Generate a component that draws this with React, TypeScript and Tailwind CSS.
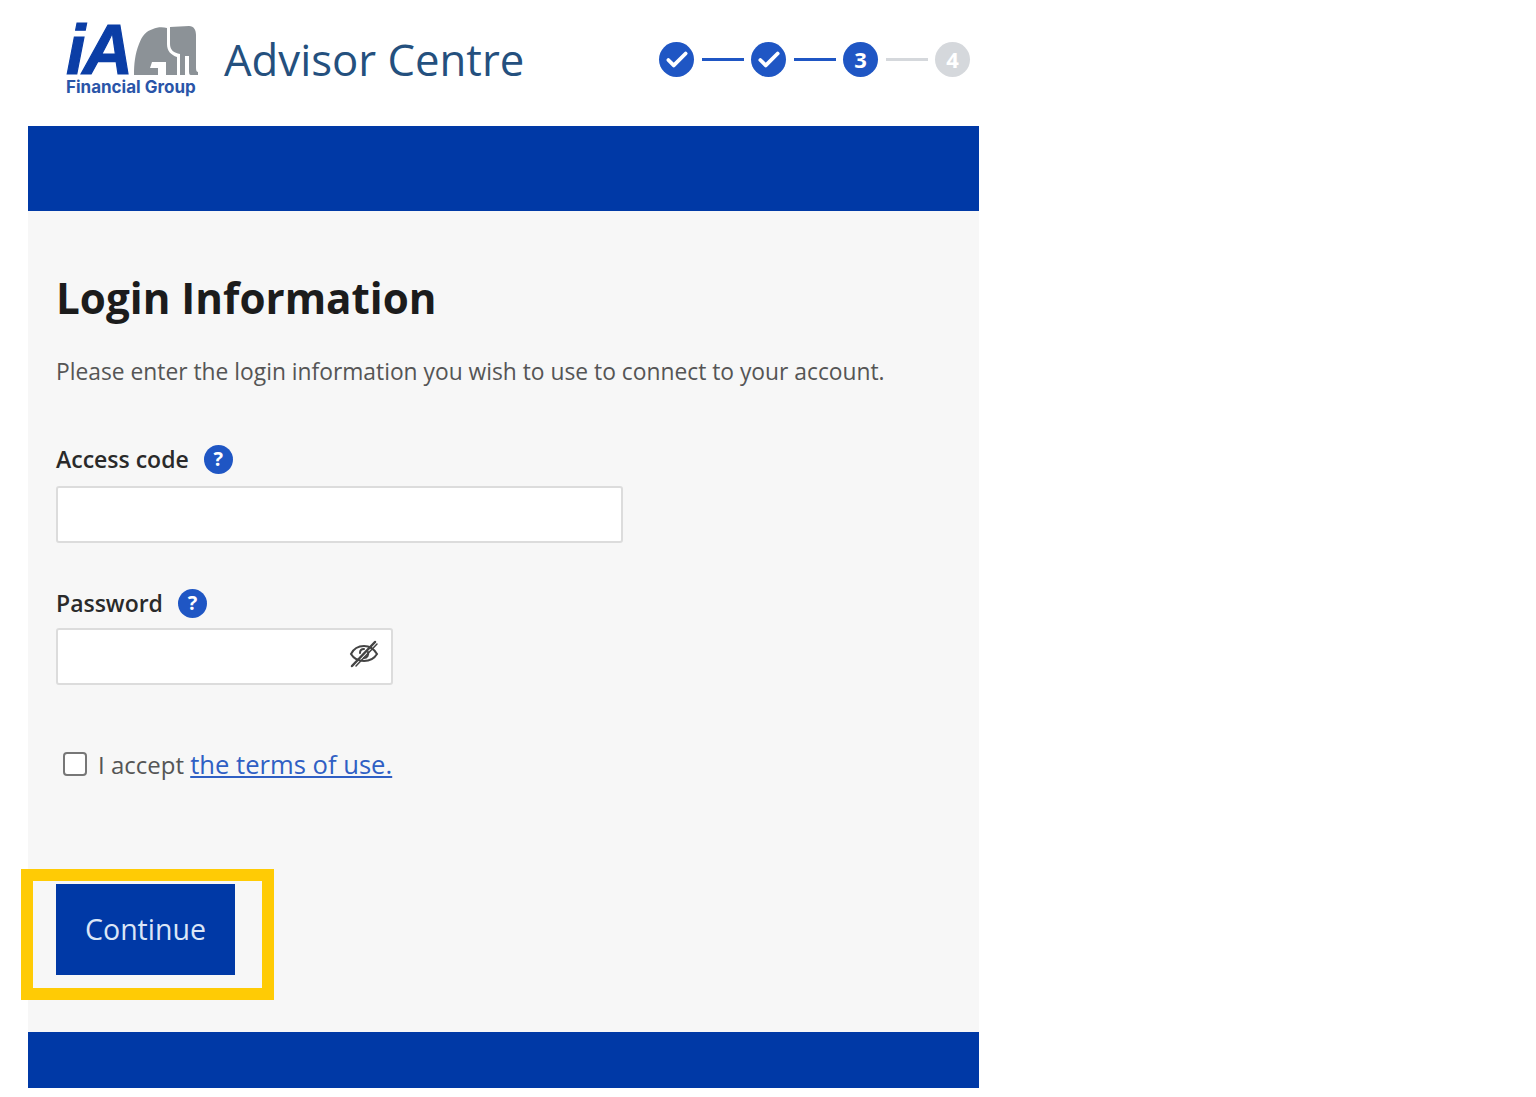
import { Fragment } from "react";
import { Check } from "lucide-react";

const STEPS = [
  { label: "", state: "done" },
  { label: "", state: "done" },
  { label: "3", state: "current" },
  { label: "4", state: "todo" },
];

// iA wordmark and elephant, both sit on the same baseline
function LogoMark() {
  return (
    <svg width="132" height="52" viewBox="0 0 132 52" className="block overflow-visible">
      <text
        x="0"
        y="50"
        fontFamily="'Liberation Sans', sans-serif"
        fontSize="70"
        fontWeight="700"
        fontStyle="italic"
        letterSpacing="-3"
        fill="#0b3ea6"
        stroke="#0b3ea6"
        strokeWidth="1.2"
      >
        iA
      </text>
      <g transform="translate(67 0)">
        <path
          d="M20 5 C24 3 30 3 34 4 L34 20 C34 27 38 31 44 33 L44 51 L33 51 L33 38 L19 38 L17 44 L25 44 L25 51 L1 51 C1 40 2 30 6 20 C9 12 13 7 20 5 Z"
          fill="#8c9297"
        />
        <path
          d="M37 3 L56 2 C61 2 63 6 63 11 L63 44 C63 47 64 48 65 48 L65 51 L58 51 C56 51 56 49 56 46 L56 32 L52 32 L52 51 L47 51 L47 30 C41 29 37 26 37 20 Z"
          fill="#8c9297"
        />
      </g>
    </svg>
  );
}

function SlashedEye() {
  return (
    <svg width="30" height="30" viewBox="0 0 30 30" fill="none" stroke="#444" strokeWidth="2" strokeLinecap="round">
      <path d="M2 15 C5 9 10 7 15 7 C20 7 25 10 28 15 C25 20 20 22 15 22 C10 22 5 20 2 15 Z" />
      <path d="M11 14 C11 11 13 10 15 10" />
      <path d="M19 13 C20 16 18 19 15 19" />
      <path d="M3 27 L26 3" strokeWidth="2.5" />
      <path d="M7 27 L28 5" strokeWidth="1.5" />
    </svg>
  );
}

function Stepper() {
  return (
    <div className="flex items-center gap-[7.5px]">
      {STEPS.map((s, i) => (
        <Fragment key={i}>
          {i > 0 && (
            <div className={`h-[3px] w-[42px] ${s.state === "todo" ? "bg-[#d5d8dc]" : "bg-[#1f56c4]"}`} />
          )}
          <div
            className={`flex h-[35px] w-[35px] items-center justify-center rounded-full text-[22px] font-bold ${
              s.state === "todo" ? "bg-[#d5d8dc] text-white" : "bg-[#1f56c4] text-white"
            }`}
          >
            {s.state === "done" ? <Check size={26} strokeWidth={3.5} /> : s.label}
          </div>
        </Fragment>
      ))}
    </div>
  );
}

function HelpDot() {
  return (
    <span className="flex h-[29px] w-[29px] items-center justify-center rounded-full bg-[#1f56c4] text-[20px] font-bold leading-none text-white">
      ?
    </span>
  );
}

export default function App() {
  return (
    <div className="min-h-[1097px] bg-white font-['Open_Sans',sans-serif]">
      <div className="ml-[28px] w-[951px]">
        {/* Header */}
        <header className="flex h-[126px] items-center pb-[7px] pl-[38px] pr-[9px]">
          <div className="flex w-[132px] flex-col">
            <LogoMark />
            <span className="mt-[3px] whitespace-nowrap font-['Inter',sans-serif] text-[17px] font-bold leading-[17px] text-[#2a55a8]">
              Financial Group
            </span>
          </div>
          <h1 className="ml-[26px] text-[43.7px] font-normal leading-none text-[#24507e]">Advisor Centre</h1>
          <div className="ml-auto">
            <Stepper />
          </div>
        </header>

        <div className="h-[85px] bg-[#0039a6]" />

        {/* Form panel */}
        <main className="relative h-[821px] bg-[#f7f7f7] px-[28px] pt-[60px]">
          <h2 className="text-[42.2px] font-bold leading-[54px] text-[#1c1c1c]">Login Information</h2>
          <p className="mt-[31px] text-[22.8px] leading-[32px] text-[#555]">
            Please enter the login information you wish to use to connect to your account.
          </p>

          <div className="mt-[55px] flex h-[32px] items-center gap-[15px]">
            <label className="text-[23px] font-semibold text-[#2a2a2a]">Access code</label>
            <HelpDot />
          </div>
          <input className="mt-[11px] block h-[57px] w-[567px] rounded-[3px] border-2 border-[#dcdcdc] bg-white" />

          <div className="mt-[44px] flex h-[32px] items-center gap-[15px]">
            <label className="text-[23px] font-semibold text-[#2a2a2a]">Password</label>
            <HelpDot />
          </div>
          <div className="mt-[9px] flex h-[57px] w-[337px] items-center justify-end rounded-[3px] border-2 border-[#dcdcdc] bg-white pb-[6px] pr-[12px]">
            <SlashedEye />
          </div>

          <div className="ml-[7px] mt-[64px] flex items-center">
            <input
              type="checkbox"
              className="-mt-[2px] h-6 w-6 appearance-none rounded-[4px] border-2 border-[#777] bg-white"
            />
            <span className="ml-[11px] text-[24px] leading-[32px] text-[#555]">
              I accept{" "}
              <a href="#" className="text-[25.6px] leading-[32px] text-[#2f5fc4] underline">
                the terms of use.
              </a>
            </span>
          </div>

          <button className="mt-[103px] block h-[91px] w-[179px] bg-[#0039a6] text-[28.5px] text-[#dbe6f7]">
            Continue
          </button>

          {/* Annotation frame around the button */}
          <div className="absolute left-[-7px] top-[658px] h-[131px] w-[253px] border-[12px] border-[#ffcb05]" />
        </main>

        <div className="h-[56px] bg-[#0039a6]" />
      </div>
    </div>
  );
}
